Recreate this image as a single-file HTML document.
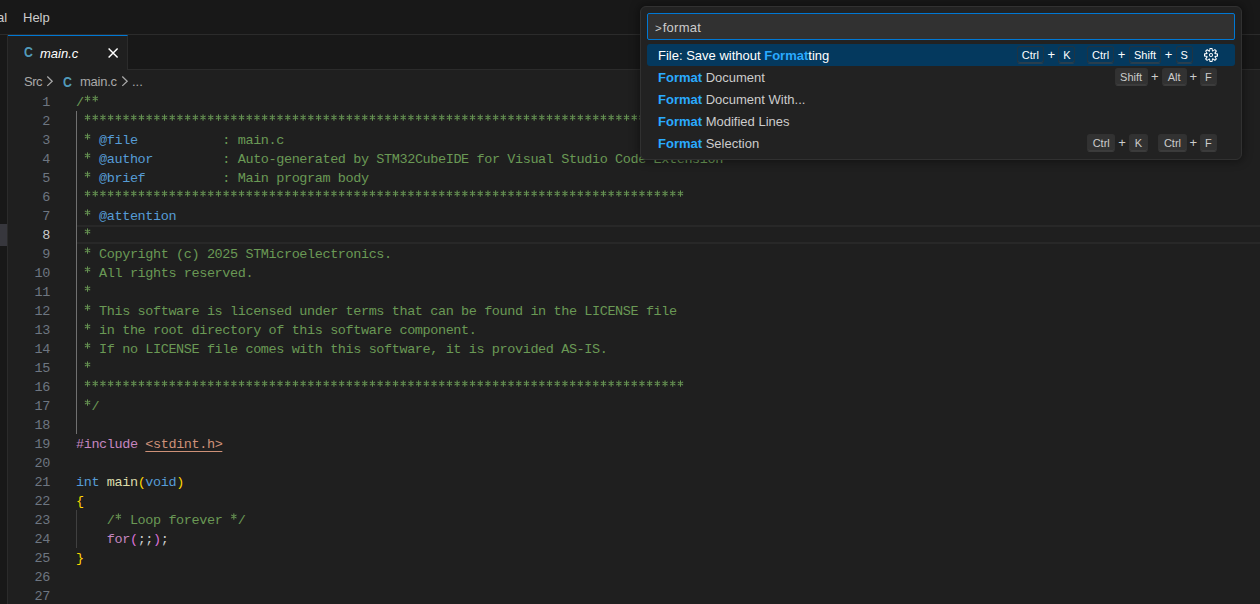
<!DOCTYPE html>
<html><head><meta charset="utf-8">
<style>
*{margin:0;padding:0;box-sizing:border-box}
html,body{width:1260px;height:604px;overflow:hidden;background:#1f1f1f}
body{position:relative;font-family:"Liberation Sans",sans-serif;color:#cccccc}
.abs{position:absolute}
svg{display:block}
#title{left:0;top:0;width:1260px;height:35px;background:#181818;border-bottom:1px solid #2b2b2b}
.menu{position:absolute;top:10px;font-size:13px;line-height:16px;color:#cccccc}
#strip{left:0;top:35px;width:8px;height:569px;background:#181818;border-right:1px solid #2b2b2b}
#strip .sel{position:absolute;left:0;top:189px;width:7px;height:22px;background:#37373d}
#tabs{left:8px;top:35px;width:1252px;height:35px;background:#181818;border-bottom:1px solid #2b2b2b}
#tab{left:8px;top:35px;width:120px;height:35px;background:#1f1f1f;border-top:1px solid #0078d4;border-right:1px solid #2b2b2b}
.cicon{position:absolute;font-weight:bold;color:#519aba;font-size:14px;line-height:14px;transform:scaleX(0.88);transform-origin:0 0}
#crumbs{left:8px;top:70px;width:1252px;height:22px}
.code{position:absolute;left:76px;font-family:"Liberation Mono",monospace;font-size:13.5px;letter-spacing:-0.4px;line-height:19px;padding-top:1px;white-space:pre;color:#cccccc}
.ln{position:absolute;left:8px;width:42px;padding-top:1px;text-align:right;font-family:"Liberation Mono",monospace;font-size:13.5px;letter-spacing:-0.4px;line-height:19px;color:#6e7681}
.c{color:#6a9955}.t{color:#569cd6}.k{color:#569cd6}.f{color:#dcdcaa}.p{color:#c586c0}.s{color:#ce9178}.b1{color:#ffd700}.b2{color:#da70d6}
.ln.act{color:#cccccc}
.u{text-decoration:underline;text-underline-offset:3px}
.guide{position:absolute;width:1px}
#pal{left:640px;top:6px;width:602px;height:154px;background:#222222;border:1px solid #313131;border-radius:6px;box-shadow:0 0 8px 2px rgba(0,0,0,0.36)}
#inp{left:6px;top:6px;width:588px;height:27px;background:#313131;border:1px solid #0078d4;border-radius:2px}
.row{position:absolute;left:6px;width:588px;height:22px;border-radius:3px}
.row.sel{background:#04395e}
.lbl{position:absolute;left:11px;top:4px;font-size:13px;line-height:16px;color:#cccccc;white-space:pre}
.row.sel .lbl{color:#ffffff}
.row.sel .key{background:transparent;color:#ffffff}
.row.sel .plus{color:#ffffff}
.hl{color:#2aaaff;font-weight:bold}
.key{position:absolute;top:2px;height:18px;line-height:16px;font-size:11px;text-align:center;color:#cccccc;border:1px solid rgba(51,51,51,0.6);border-bottom-color:rgba(68,68,68,0.6);box-shadow:inset 0 -1px 0 rgba(68,68,68,0.6);border-radius:3px;background:rgba(128,128,128,0.17)}
.plus{position:absolute;top:3px;width:10px;text-align:center;font-size:13px;line-height:16px;color:#cccccc}
</style></head><body>
<div id="title" class="abs">
  <div class="menu" style="left:-3px">al</div>
  <div class="menu" style="left:23px">Help</div>
</div>
<div id="strip" class="abs"><div class="sel"></div></div>
<div id="tabs" class="abs"></div>
<div id="tab" class="abs">
  <div class="cicon" style="left:16px;top:9px">C</div>
  <div class="abs" style="left:32px;top:10px;font-size:13px;line-height:16px;font-style:italic;color:#ffffff">main.c</div>
  <div class="abs" style="left:99px;top:11px;width:12px;height:12px">
    <svg width="12" height="12" viewBox="0 0 12 12"><path d="M1.6 1.4L10.6 10.4M10.6 1.4L1.6 10.4" stroke="#ffffff" stroke-width="1.45"/></svg>
  </div>
</div>
<div id="crumbs" class="abs">
  <div class="abs" style="left:16px;top:4px;font-size:13px;line-height:16px;color:#a9a9a9;letter-spacing:-0.5px">Src</div>
  <div class="abs" style="left:38px;top:6px"><svg width="8" height="11" viewBox="0 0 8 11"><path d="M1.3 0.5L6.2 5.2L1.3 9.9" fill="none" stroke="#a9a9a9" stroke-width="1.25"/></svg></div>
  <div class="cicon" style="left:55px;top:5px">C</div>
  <div class="abs" style="left:72px;top:4px;font-size:13px;line-height:16px;color:#a9a9a9;letter-spacing:-0.25px">main.c</div>
  <div class="abs" style="left:113px;top:6px"><svg width="8" height="11" viewBox="0 0 8 11"><path d="M1.3 0.5L6.2 5.2L1.3 9.9" fill="none" stroke="#a9a9a9" stroke-width="1.25"/></svg></div>
  <div class="abs" style="left:124px;top:4px;font-size:13px;line-height:16px;color:#a9a9a9">...</div>
</div>

<!-- current line highlight line 8 -->
<div class="abs" style="left:77px;top:225px;width:1183px;height:19px;border-top:2px solid #282828;border-bottom:2px solid #282828"></div>

<div class="guide" style="left:76px;top:111px;height:323px;background:#707070"></div>
<div class="guide" style="left:76px;top:510px;height:38px;background:#404040"></div>

<div id="code">
<div class="ln" style="top:92px">1</div>
<div class="code" style="top:92px"><span class="c">/  </span></div>
<div class="ln" style="top:111px">2</div>
<div class="code" style="top:111px"><span class="c">                                                                               </span></div>
<div class="ln" style="top:130px">3</div>
<div class="code" style="top:130px"><span class="c">   </span><span class="t">@file</span><span class="c">           : main.c</span></div>
<div class="ln" style="top:149px">4</div>
<div class="code" style="top:149px"><span class="c">   </span><span class="t">@author</span><span class="c">         : Auto-generated by STM32CubeIDE for Visual Studio Code Extension</span></div>
<div class="ln" style="top:168px">5</div>
<div class="code" style="top:168px"><span class="c">   </span><span class="t">@brief</span><span class="c">          : Main program body</span></div>
<div class="ln" style="top:187px">6</div>
<div class="code" style="top:187px"><span class="c">                                                                               </span></div>
<div class="ln" style="top:206px">7</div>
<div class="code" style="top:206px"><span class="c">   </span><span class="t">@attention</span></div>
<div class="ln act" style="top:225px">8</div>
<div class="code" style="top:225px"><span class="c">  </span></div>
<div class="ln" style="top:244px">9</div>
<div class="code" style="top:244px"><span class="c">   Copyright (c) 2025 STMicroelectronics.</span></div>
<div class="ln" style="top:263px">10</div>
<div class="code" style="top:263px"><span class="c">   All rights reserved.</span></div>
<div class="ln" style="top:282px">11</div>
<div class="code" style="top:282px"><span class="c">  </span></div>
<div class="ln" style="top:301px">12</div>
<div class="code" style="top:301px"><span class="c">   This software is licensed under terms that can be found in the LICENSE file</span></div>
<div class="ln" style="top:320px">13</div>
<div class="code" style="top:320px"><span class="c">   in the root directory of this software component.</span></div>
<div class="ln" style="top:339px">14</div>
<div class="code" style="top:339px"><span class="c">   If no LICENSE file comes with this software, it is provided AS-IS.</span></div>
<div class="ln" style="top:358px">15</div>
<div class="code" style="top:358px"><span class="c">  </span></div>
<div class="ln" style="top:377px">16</div>
<div class="code" style="top:377px"><span class="c">                                                                               </span></div>
<div class="ln" style="top:396px">17</div>
<div class="code" style="top:396px"><span class="c">  /</span></div>
<div class="ln" style="top:415px">18</div>
<div class="ln" style="top:434px">19</div>
<div class="code" style="top:434px"><span class="p">#include</span> <span class="s u">&lt;stdint.h&gt;</span></div>
<div class="ln" style="top:453px">20</div>
<div class="ln" style="top:472px">21</div>
<div class="code" style="top:472px"><span class="k">int</span> <span class="f">main</span><span class="b1">(</span><span class="k">void</span><span class="b1">)</span></div>
<div class="ln" style="top:491px">22</div>
<div class="code" style="top:491px"><span class="b1">{</span></div>
<div class="ln" style="top:510px">23</div>
<div class="code" style="top:510px">    <span class="c">/  Loop forever  /</span></div>
<div class="ln" style="top:529px">24</div>
<div class="code" style="top:529px">    <span class="p">for</span><span class="b2">(</span>;;<span class="b2">)</span>;</div>
<div class="ln" style="top:548px">25</div>
<div class="code" style="top:548px"><span class="b1">}</span></div>
<div class="ln" style="top:567px">26</div>
<div class="ln" style="top:586px">27</div>
<svg class="abs" style="left:0;top:0" width="1260" height="604"><defs><path id="st" d="M0 -2.7V2.7M-2.3 -1.33L2.3 1.33M-2.3 1.33L2.3 -1.33" stroke="#6a9955" stroke-width="1.05" stroke-linecap="round" fill="none"/></defs><use href="#st" x="87.55" y="98.50"/><use href="#st" x="95.25" y="98.50"/><use href="#st" x="87.55" y="117.50"/><use href="#st" x="95.25" y="117.50"/><use href="#st" x="102.95" y="117.50"/><use href="#st" x="110.65" y="117.50"/><use href="#st" x="118.35" y="117.50"/><use href="#st" x="126.05" y="117.50"/><use href="#st" x="133.75" y="117.50"/><use href="#st" x="141.45" y="117.50"/><use href="#st" x="149.15" y="117.50"/><use href="#st" x="156.85" y="117.50"/><use href="#st" x="164.55" y="117.50"/><use href="#st" x="172.25" y="117.50"/><use href="#st" x="179.95" y="117.50"/><use href="#st" x="187.65" y="117.50"/><use href="#st" x="195.35" y="117.50"/><use href="#st" x="203.05" y="117.50"/><use href="#st" x="210.75" y="117.50"/><use href="#st" x="218.45" y="117.50"/><use href="#st" x="226.15" y="117.50"/><use href="#st" x="233.85" y="117.50"/><use href="#st" x="241.55" y="117.50"/><use href="#st" x="249.25" y="117.50"/><use href="#st" x="256.95" y="117.50"/><use href="#st" x="264.65" y="117.50"/><use href="#st" x="272.35" y="117.50"/><use href="#st" x="280.05" y="117.50"/><use href="#st" x="287.75" y="117.50"/><use href="#st" x="295.45" y="117.50"/><use href="#st" x="303.15" y="117.50"/><use href="#st" x="310.85" y="117.50"/><use href="#st" x="318.55" y="117.50"/><use href="#st" x="326.25" y="117.50"/><use href="#st" x="333.95" y="117.50"/><use href="#st" x="341.65" y="117.50"/><use href="#st" x="349.35" y="117.50"/><use href="#st" x="357.05" y="117.50"/><use href="#st" x="364.75" y="117.50"/><use href="#st" x="372.45" y="117.50"/><use href="#st" x="380.15" y="117.50"/><use href="#st" x="387.85" y="117.50"/><use href="#st" x="395.55" y="117.50"/><use href="#st" x="403.25" y="117.50"/><use href="#st" x="410.95" y="117.50"/><use href="#st" x="418.65" y="117.50"/><use href="#st" x="426.35" y="117.50"/><use href="#st" x="434.05" y="117.50"/><use href="#st" x="441.75" y="117.50"/><use href="#st" x="449.45" y="117.50"/><use href="#st" x="457.15" y="117.50"/><use href="#st" x="464.85" y="117.50"/><use href="#st" x="472.55" y="117.50"/><use href="#st" x="480.25" y="117.50"/><use href="#st" x="487.95" y="117.50"/><use href="#st" x="495.65" y="117.50"/><use href="#st" x="503.35" y="117.50"/><use href="#st" x="511.05" y="117.50"/><use href="#st" x="518.75" y="117.50"/><use href="#st" x="526.45" y="117.50"/><use href="#st" x="534.15" y="117.50"/><use href="#st" x="541.85" y="117.50"/><use href="#st" x="549.55" y="117.50"/><use href="#st" x="557.25" y="117.50"/><use href="#st" x="564.95" y="117.50"/><use href="#st" x="572.65" y="117.50"/><use href="#st" x="580.35" y="117.50"/><use href="#st" x="588.05" y="117.50"/><use href="#st" x="595.75" y="117.50"/><use href="#st" x="603.45" y="117.50"/><use href="#st" x="611.15" y="117.50"/><use href="#st" x="618.85" y="117.50"/><use href="#st" x="626.55" y="117.50"/><use href="#st" x="634.25" y="117.50"/><use href="#st" x="641.95" y="117.50"/><use href="#st" x="649.65" y="117.50"/><use href="#st" x="657.35" y="117.50"/><use href="#st" x="665.05" y="117.50"/><use href="#st" x="672.75" y="117.50"/><use href="#st" x="680.45" y="117.50"/><use href="#st" x="87.55" y="136.50"/><use href="#st" x="87.55" y="155.50"/><use href="#st" x="87.55" y="174.50"/><use href="#st" x="87.55" y="193.50"/><use href="#st" x="95.25" y="193.50"/><use href="#st" x="102.95" y="193.50"/><use href="#st" x="110.65" y="193.50"/><use href="#st" x="118.35" y="193.50"/><use href="#st" x="126.05" y="193.50"/><use href="#st" x="133.75" y="193.50"/><use href="#st" x="141.45" y="193.50"/><use href="#st" x="149.15" y="193.50"/><use href="#st" x="156.85" y="193.50"/><use href="#st" x="164.55" y="193.50"/><use href="#st" x="172.25" y="193.50"/><use href="#st" x="179.95" y="193.50"/><use href="#st" x="187.65" y="193.50"/><use href="#st" x="195.35" y="193.50"/><use href="#st" x="203.05" y="193.50"/><use href="#st" x="210.75" y="193.50"/><use href="#st" x="218.45" y="193.50"/><use href="#st" x="226.15" y="193.50"/><use href="#st" x="233.85" y="193.50"/><use href="#st" x="241.55" y="193.50"/><use href="#st" x="249.25" y="193.50"/><use href="#st" x="256.95" y="193.50"/><use href="#st" x="264.65" y="193.50"/><use href="#st" x="272.35" y="193.50"/><use href="#st" x="280.05" y="193.50"/><use href="#st" x="287.75" y="193.50"/><use href="#st" x="295.45" y="193.50"/><use href="#st" x="303.15" y="193.50"/><use href="#st" x="310.85" y="193.50"/><use href="#st" x="318.55" y="193.50"/><use href="#st" x="326.25" y="193.50"/><use href="#st" x="333.95" y="193.50"/><use href="#st" x="341.65" y="193.50"/><use href="#st" x="349.35" y="193.50"/><use href="#st" x="357.05" y="193.50"/><use href="#st" x="364.75" y="193.50"/><use href="#st" x="372.45" y="193.50"/><use href="#st" x="380.15" y="193.50"/><use href="#st" x="387.85" y="193.50"/><use href="#st" x="395.55" y="193.50"/><use href="#st" x="403.25" y="193.50"/><use href="#st" x="410.95" y="193.50"/><use href="#st" x="418.65" y="193.50"/><use href="#st" x="426.35" y="193.50"/><use href="#st" x="434.05" y="193.50"/><use href="#st" x="441.75" y="193.50"/><use href="#st" x="449.45" y="193.50"/><use href="#st" x="457.15" y="193.50"/><use href="#st" x="464.85" y="193.50"/><use href="#st" x="472.55" y="193.50"/><use href="#st" x="480.25" y="193.50"/><use href="#st" x="487.95" y="193.50"/><use href="#st" x="495.65" y="193.50"/><use href="#st" x="503.35" y="193.50"/><use href="#st" x="511.05" y="193.50"/><use href="#st" x="518.75" y="193.50"/><use href="#st" x="526.45" y="193.50"/><use href="#st" x="534.15" y="193.50"/><use href="#st" x="541.85" y="193.50"/><use href="#st" x="549.55" y="193.50"/><use href="#st" x="557.25" y="193.50"/><use href="#st" x="564.95" y="193.50"/><use href="#st" x="572.65" y="193.50"/><use href="#st" x="580.35" y="193.50"/><use href="#st" x="588.05" y="193.50"/><use href="#st" x="595.75" y="193.50"/><use href="#st" x="603.45" y="193.50"/><use href="#st" x="611.15" y="193.50"/><use href="#st" x="618.85" y="193.50"/><use href="#st" x="626.55" y="193.50"/><use href="#st" x="634.25" y="193.50"/><use href="#st" x="641.95" y="193.50"/><use href="#st" x="649.65" y="193.50"/><use href="#st" x="657.35" y="193.50"/><use href="#st" x="665.05" y="193.50"/><use href="#st" x="672.75" y="193.50"/><use href="#st" x="680.45" y="193.50"/><use href="#st" x="87.55" y="212.50"/><use href="#st" x="87.55" y="231.50"/><use href="#st" x="87.55" y="250.50"/><use href="#st" x="87.55" y="269.50"/><use href="#st" x="87.55" y="288.50"/><use href="#st" x="87.55" y="307.50"/><use href="#st" x="87.55" y="326.50"/><use href="#st" x="87.55" y="345.50"/><use href="#st" x="87.55" y="364.50"/><use href="#st" x="87.55" y="383.50"/><use href="#st" x="95.25" y="383.50"/><use href="#st" x="102.95" y="383.50"/><use href="#st" x="110.65" y="383.50"/><use href="#st" x="118.35" y="383.50"/><use href="#st" x="126.05" y="383.50"/><use href="#st" x="133.75" y="383.50"/><use href="#st" x="141.45" y="383.50"/><use href="#st" x="149.15" y="383.50"/><use href="#st" x="156.85" y="383.50"/><use href="#st" x="164.55" y="383.50"/><use href="#st" x="172.25" y="383.50"/><use href="#st" x="179.95" y="383.50"/><use href="#st" x="187.65" y="383.50"/><use href="#st" x="195.35" y="383.50"/><use href="#st" x="203.05" y="383.50"/><use href="#st" x="210.75" y="383.50"/><use href="#st" x="218.45" y="383.50"/><use href="#st" x="226.15" y="383.50"/><use href="#st" x="233.85" y="383.50"/><use href="#st" x="241.55" y="383.50"/><use href="#st" x="249.25" y="383.50"/><use href="#st" x="256.95" y="383.50"/><use href="#st" x="264.65" y="383.50"/><use href="#st" x="272.35" y="383.50"/><use href="#st" x="280.05" y="383.50"/><use href="#st" x="287.75" y="383.50"/><use href="#st" x="295.45" y="383.50"/><use href="#st" x="303.15" y="383.50"/><use href="#st" x="310.85" y="383.50"/><use href="#st" x="318.55" y="383.50"/><use href="#st" x="326.25" y="383.50"/><use href="#st" x="333.95" y="383.50"/><use href="#st" x="341.65" y="383.50"/><use href="#st" x="349.35" y="383.50"/><use href="#st" x="357.05" y="383.50"/><use href="#st" x="364.75" y="383.50"/><use href="#st" x="372.45" y="383.50"/><use href="#st" x="380.15" y="383.50"/><use href="#st" x="387.85" y="383.50"/><use href="#st" x="395.55" y="383.50"/><use href="#st" x="403.25" y="383.50"/><use href="#st" x="410.95" y="383.50"/><use href="#st" x="418.65" y="383.50"/><use href="#st" x="426.35" y="383.50"/><use href="#st" x="434.05" y="383.50"/><use href="#st" x="441.75" y="383.50"/><use href="#st" x="449.45" y="383.50"/><use href="#st" x="457.15" y="383.50"/><use href="#st" x="464.85" y="383.50"/><use href="#st" x="472.55" y="383.50"/><use href="#st" x="480.25" y="383.50"/><use href="#st" x="487.95" y="383.50"/><use href="#st" x="495.65" y="383.50"/><use href="#st" x="503.35" y="383.50"/><use href="#st" x="511.05" y="383.50"/><use href="#st" x="518.75" y="383.50"/><use href="#st" x="526.45" y="383.50"/><use href="#st" x="534.15" y="383.50"/><use href="#st" x="541.85" y="383.50"/><use href="#st" x="549.55" y="383.50"/><use href="#st" x="557.25" y="383.50"/><use href="#st" x="564.95" y="383.50"/><use href="#st" x="572.65" y="383.50"/><use href="#st" x="580.35" y="383.50"/><use href="#st" x="588.05" y="383.50"/><use href="#st" x="595.75" y="383.50"/><use href="#st" x="603.45" y="383.50"/><use href="#st" x="611.15" y="383.50"/><use href="#st" x="618.85" y="383.50"/><use href="#st" x="626.55" y="383.50"/><use href="#st" x="634.25" y="383.50"/><use href="#st" x="641.95" y="383.50"/><use href="#st" x="649.65" y="383.50"/><use href="#st" x="657.35" y="383.50"/><use href="#st" x="665.05" y="383.50"/><use href="#st" x="672.75" y="383.50"/><use href="#st" x="680.45" y="383.50"/><use href="#st" x="87.55" y="402.50"/><use href="#st" x="118.35" y="516.50"/><use href="#st" x="233.85" y="516.50"/></svg>
</div>

<div id="pal" class="abs">
  <div id="inp" class="abs">
    <div class="abs" style="left:7px;top:6px;font-size:13px;line-height:16px;color:#cccccc"><span style="font-size:11.5px;margin-right:1px">&gt;</span><span style="letter-spacing:0.25px">format</span></div>
  </div>

  <div class="row sel" style="top:37px"><div class="lbl">File: Save without <span class="hl">Format</span>ting</div>
    <span class="key" style="left:369.5px;width:27.8px">Ctrl</span><span class="key" style="left:411.4px;width:16.9px">K</span><span class="key" style="left:439.7px;width:27.8px">Ctrl</span><span class="key" style="left:481.6px;width:32.8px">Shift</span><span class="key" style="left:528.5px;width:17.2px">S</span><span class="plus" style="left:399.3px">+</span><span class="plus" style="left:469.5px">+</span><span class="plus" style="left:516.5px">+</span>
    <div class="abs" style="left:556px;top:3px;width:16px;height:16px" id="gear"><svg width="16" height="16" viewBox="0 0 16 16"><path fill="#ffffff" fill-rule="evenodd" d="M9.1 4.4L8.6 2H7.4l-.5 2.4-.7.3-2-1.3-.9.8 1.3 2-.2.7-2.4.5v1.2l2.4.5.3.8-1.3 2 .8.8 2-1.3.8.3.4 2.3h1.2l.5-2.4.8-.3 2 1.3.8-.8-1.3-2 .3-.8 2.3-.4V7.4l-2.4-.5-.3-.8 1.3-2-.8-.8-2 1.3-.7-.2zM9.4 1l.5 2.4L12 2.1l2 2-1.4 2.1 2.4.4v2.8l-2.4.5L14 12l-2 2-2.1-1.4-.5 2.4H6.6l-.5-2.4L4 13.9l-2-2 1.4-2.1L1 9.4V6.6l2.4-.5L2.1 4l2-2 2.1 1.4.4-2.4h2.8zm.6 7c0 1.1-.9 2-2 2s-2-.9-2-2 .9-2 2-2 2 .9 2 2zM8 9c.6 0 1-.4 1-1s-.4-1-1-1-1 .4-1 1 .4 1 1 1z"/></svg></div>
  </div>
  <div class="row" style="top:59px"><div class="lbl"><span class="hl">Format</span> Document</div>
    <span class="key" style="left:467.5px;width:33.2px">Shift</span><span class="key" style="left:514.7px;width:24.9px">Alt</span><span class="key" style="left:553.0px;width:16.5px">F</span><span class="plus" style="left:502.7px">+</span><span class="plus" style="left:541.3px">+</span>
  </div>
  <div class="row" style="top:81px"><div class="lbl"><span class="hl">Format</span> Document With...</div></div>
  <div class="row" style="top:103px"><div class="lbl"><span class="hl">Format</span> Modified Lines</div></div>
  <div class="row" style="top:125px"><div class="lbl"><span class="hl">Format</span> Selection</div>
    <span class="key" style="left:440.2px;width:28.1px">Ctrl</span><span class="key" style="left:482.0px;width:18.7px">K</span><span class="key" style="left:511.3px;width:28.3px">Ctrl</span><span class="key" style="left:553.0px;width:16.5px">F</span><span class="plus" style="left:470.1px">+</span><span class="plus" style="left:541.3px">+</span>
  </div>
</div>
</body></html>
